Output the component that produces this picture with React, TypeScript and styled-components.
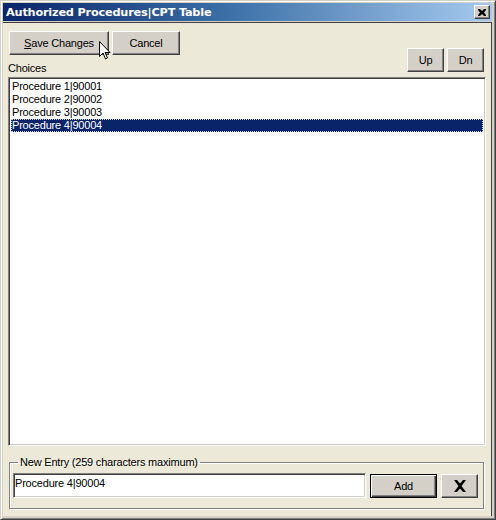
import React from "react";
import styled, { createGlobalStyle } from "styled-components";

const Global = createGlobalStyle`
  html, body { margin: 0; padding: 0; background: #d4d0c8; }
  * { box-sizing: border-box; }
  body { font-family: "Liberation Sans", Arial, sans-serif; font-size: 11px; letter-spacing: -0.2px; }
`;

const Window = styled.div`
  position: relative;
  width: 496px;
  height: 520px;
  background: #d4d0c8;
  border: 1px solid;
  border-color: #d4d0c8 #404040 #404040 #d4d0c8;
  box-shadow: inset 1px 1px #ffffff, inset -1px -1px #808080;
  padding: 2px 3px 3px 2px;
  display: flex;
  flex-direction: column;
`;

const TitleBar = styled.div`
  height: 18px;
  display: flex;
  align-items: center;
  justify-content: space-between;
  padding: 0 2px 0 3px;
  background: linear-gradient(to right, #0a246a 0%, #3a6ea5 45%, #a6caf0 100%);
`;

const Title = styled.span`
  color: #ffffff;
  font-family: "DejaVu Sans", Verdana, sans-serif;
  font-weight: bold;
  font-size: 11.3px;
  letter-spacing: -0.2px;
  white-space: nowrap;
`;

const CloseBtn = styled.div`
  width: 16px;
  height: 14px;
  background: #d4d0c8;
  border: 1px solid;
  border-color: #ffffff #404040 #404040 #ffffff;
  box-shadow: inset -1px -1px #808080;
  display: flex;
  align-items: center;
  justify-content: center;
`;

const Body = styled.div`
  flex: 1;
  margin-top: 1px;
  background: #ece9d8;
  border-top: 1px solid #404040;
  border-right: 1px solid #404040;
  display: flex;
  flex-direction: column;
  padding: 8px 5px 7px 5px;
`;

const Header = styled.div`
  display: flex;
  justify-content: space-between;
  align-items: flex-end;
`;

const LeftCol = styled.div`
  display: flex;
  flex-direction: column;
`;

const ButtonRow = styled.div<{ $gap: number; $pl?: number }>`
  display: flex;
  gap: ${(p) => p.$gap}px;
  padding-left: ${(p) => p.$pl ?? 0}px;
`;

const Btn = styled.button<{ $w: number; $default?: boolean }>`
  width: ${(p) => p.$w}px;
  height: 24px;
  padding: 0;
  background: #d4d0c8;
  font-family: "Liberation Sans", Arial, sans-serif;
  font-size: 11px;
  letter-spacing: -0.2px;
  color: #000;
  border: 1px solid;
  border-color: ${(p) => (p.$default ? "#000" : "#ffffff #404040 #404040 #ffffff")};
  box-shadow: ${(p) =>
    p.$default
      ? "inset 1px 1px #ffffff, inset -1px -1px #404040, inset -2px -2px #808080"
      : "inset -1px -1px #808080, inset 1px 1px #d4d0c8"};
  display: flex;
  align-items: center;
  justify-content: center;
  cursor: default;
`;

const Underline = styled.span`
  text-decoration: underline;
`;

const Label = styled.div`
  font-size: 11px;
  color: #000;
  margin-top: 7px;
  height: 14px;
  line-height: 13px;
`;

const RightButtons = styled.div`
  display: flex;
  gap: 3px;
  padding-right: 2px;
  margin-bottom: 4px;
`;

const List = styled.div`
  flex: 1;
  margin-top: 1px;
  background: #ffffff;
  border: 1px solid;
  border-color: #808080 #ffffff #ffffff #808080;
  box-shadow: inset 1px 1px #404040, inset -1px -1px #d4d0c8;
  padding: 2px 2px;
`;

const Item = styled.div<{ $sel?: boolean }>`
  height: 13px;
  line-height: 13px;
  font-size: 11px;
  padding-left: 1px;
  white-space: nowrap;
  color: ${(p) => (p.$sel ? "#ffffff" : "#000000")};
  background: ${(p) => (p.$sel ? "#0a246a" : "transparent")};
  outline: ${(p) => (p.$sel ? "1px dotted #d4d0c8" : "none")};
  outline-offset: -1px;
`;

const Group = styled.fieldset`
  margin: 10px 2px 0 1px;
  padding: 4px 5px 10px 3px;
  border: 1px solid #808080;
  box-shadow: 1px 1px #ffffff, inset 1px 1px #ffffff;
  display: flex;
  align-items: center;
  gap: 4px;
  min-width: 0;
`;

const Legend = styled.legend`
  font-size: 11px;
  line-height: 13px;
  padding: 0 2px;
  margin-left: 5px;
  color: #000;
`;

const TextBox = styled.div`
  width: 353px;
  height: 25px;
  background: #fff;
  border: 1px solid;
  border-color: #808080 #ffffff #ffffff #808080;
  box-shadow: inset 1px 1px #404040, inset -1px -1px #d4d0c8;
  font-size: 11px;
  padding: 3px 1px;
  white-space: nowrap;
`;

const Cursor = styled.svg`
  position: absolute;
  left: 98px;
  top: 40px;
`;

const items = [
  "Procedure 1|90001",
  "Procedure 2|90002",
  "Procedure 3|90003",
  "Procedure 4|90004",
];

export default function App() {
  return (
    <>
      <Global />
      <Window>
        <TitleBar>
          <Title>Authorized Procedures|CPT Table</Title>
          <CloseBtn>
            <svg width="8" height="7" viewBox="0 0 8 7">
              <path d="M0 0h2l2 2 2-2h2v1l-2 2.5 2 2.5v1h-2l-2-2-2 2h-2v-1l2-2.5-2-2.5z" fill="#000" />
            </svg>
          </CloseBtn>
        </TitleBar>
        <Body>
          <Header>
            <LeftCol>
              <ButtonRow $gap={3} $pl={1}>
                <Btn $w={100}>
                  <Underline>S</Underline>ave Changes
                </Btn>
                <Btn $w={68}>Cancel</Btn>
              </ButtonRow>
              <Label>Choices</Label>
            </LeftCol>
            <RightButtons>
              <Btn $w={37}>Up</Btn>
              <Btn $w={37}>Dn</Btn>
            </RightButtons>
          </Header>
          <List>
            {items.map((t, i) => (
              <Item key={t} $sel={i === 3}>
                {t}
              </Item>
            ))}
          </List>
          <Group>
            <Legend>New Entry (259 characters maximum)</Legend>
            <TextBox>Procedure 4|90004</TextBox>
            <Btn $w={67} $default>
              Add
            </Btn>
            <Btn $w={37}>
              <svg width="14" height="12" viewBox="0 0 14 12">
                <path d="M1 0h3l3 3.5 3-3.5h3l-4.5 6 4.5 6h-3l-3-3.5-3 3.5h-3l4.5-6z" fill="#000" />
              </svg>
            </Btn>
          </Group>
        </Body>
        <Cursor width="12" height="20" viewBox="0 0 12 20">
          <path d="M0.5 0.5v15l3.5-3.5 2.5 6 2-1-2.5-5.5h5z" fill="#fff" stroke="#000" strokeWidth="1" />
        </Cursor>
      </Window>
    </>
  );
}
